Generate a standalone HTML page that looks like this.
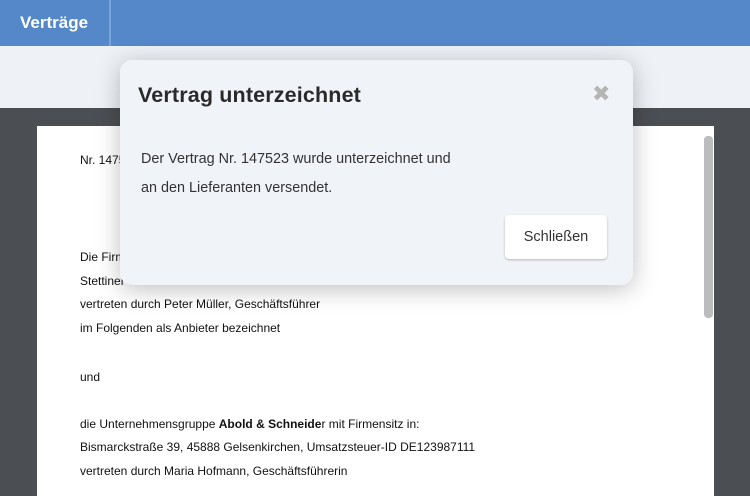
<!DOCTYPE html>
<html><head><meta charset="utf-8"><style>
*{margin:0;padding:0;box-sizing:border-box}
body{width:750px;height:485px;overflow:hidden;position:relative;background:#4b4e52;font-family:"Liberation Sans",sans-serif}
.hdr{position:absolute;left:0;top:0;width:750px;height:46px;background:#5588c8}
.hdr .t{position:absolute;left:20px;top:13px;color:#fff;font-weight:bold;font-size:17px}
.hdr .d{position:absolute;left:109px;top:0;width:2px;height:46px;background:#7aa3d6}
.band{position:absolute;left:0;top:46px;width:750px;height:62px;background:#eef2f7}
.paper{position:absolute;left:37px;top:126px;width:677px;height:370px;background:#fff}
.sb{position:absolute;left:704px;top:136px;width:9px;height:182px;background:#bbbcbe;border-radius:4px}
.doc{position:absolute;left:80px;font-size:12px;color:#111}
.modal{position:absolute;left:120px;top:60px;width:513px;height:225px;background:#f0f3f8;border-radius:12px;box-shadow:0 4px 24px rgba(0,0,0,.25)}
.mt{position:absolute;left:18px;top:23px;font-size:21.5px;font-weight:bold;color:#2a2a2a;letter-spacing:.15px}
.x{position:absolute;left:472px;top:22px;font-size:22px;color:#b5b5b5;font-weight:bold;font-family:"DejaVu Sans",sans-serif}
.mb{position:absolute;left:21px;top:85px;font-size:14.4px;color:#333;line-height:29px}
.btn{position:absolute;left:385px;top:155px;width:102px;height:44px;background:#fff;border-radius:4px;box-shadow:0 1px 2px rgba(0,0,0,.25);font-size:14.5px;color:#333;text-align:center;line-height:44px}
</style></head><body>
<div class="hdr"><div class="t">Verträge</div><div class="d"></div></div>
<div class="band"></div>
<div class="paper"></div>
<div class="sb"></div>
<div class="doc" style="top:153px">Nr. 147523</div>
<div class="doc" style="top:250px">Die Firma</div>
<div class="doc" style="top:274px">Stettiner Str.</div>
<div class="doc" style="top:297px">vertreten durch Peter Müller, Geschäftsführer</div>
<div class="doc" style="top:321px">im Folgenden als Anbieter bezeichnet</div>
<div class="doc" style="top:370px">und</div>
<div class="doc" style="top:417px">die Unternehmensgruppe <b>Abold &amp; Schneide</b>r mit Firmensitz in:</div>
<div class="doc" style="top:440px">Bismarckstraße 39, 45888 Gelsenkirchen, Umsatzsteuer-ID DE123987111</div>
<div class="doc" style="top:464px">vertreten durch Maria Hofmann, Geschäftsführerin</div>
<div class="modal">
<div class="mt">Vertrag unterzeichnet</div>
<div class="x">✖</div>
<div class="mb">Der Vertrag Nr. 147523 wurde unterzeichnet und<br>an den Lieferanten versendet.</div>
<div class="btn">Schließen</div>
</div>
</body></html>
